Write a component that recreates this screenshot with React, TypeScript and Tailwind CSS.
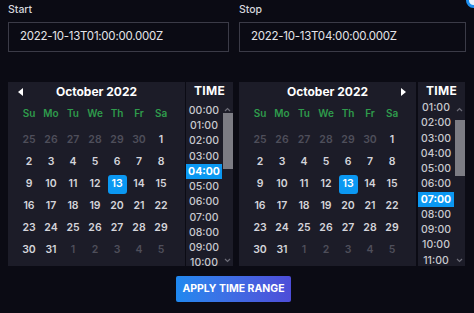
import React from "react";

const weekdays = ["Su", "Mo", "Tu", "We", "Th", "Fr", "Sa"];

type Day = { n: number; muted?: boolean };

const days: Day[] = [
    ...[25, 26, 27, 28, 29, 30].map((n) => ({ n, muted: true })),
    ...Array.from({ length: 31 }, (_, i) => ({ n: i + 1 })),
    ...[1, 2, 3, 4, 5].map((n) => ({ n, muted: true })),
];

const hour = (i: number) => `${String(i).padStart(2, "0")}:00`;

function Field({ label, value, width }: { label: string; value: string; width: string }) {
    return (
        <div className={`flex flex-col ${width}`}>
            <span className="text-[10.5px] leading-[14px] text-[#d6d6dc] font-medium">{label}</span>
            <div className="mt-[5px] h-[30px] border border-[#3b3b47] flex items-center pl-[11px] text-[11.5px] text-[#e4e4e8] tracking-[-0.25px]">
                {value}
            </div>
        </div>
    );
}

function Calendar({ arrow }: { arrow: "left" | "right" }) {
    return (
        <div className="w-[177px] h-[184px] bg-[#1c1c28] flex flex-col">
            {/* month header */}
            <div className="relative h-[20px] flex items-center justify-center text-[12px] font-bold text-white">
                {arrow === "left" && (
                    <span className="absolute left-[10px] top-[6px] w-0 h-0 border-y-[4px] border-y-transparent border-r-[5px] border-r-white" />
                )}
                October 2022
                {arrow === "right" && (
                    <span className="absolute right-[10px] top-[6px] w-0 h-0 border-y-[4px] border-y-transparent border-l-[5px] border-l-white" />
                )}
            </div>
            <div className="grid grid-cols-[repeat(7,22px)] pl-[10px] h-[22px] items-center">
                {weekdays.map((w) => (
                    <span key={w} className="text-center text-[10px] font-semibold text-[#2f9b4c]">
                        {w}
                    </span>
                ))}
            </div>
            <div className="grid grid-cols-[repeat(7,22px)] auto-rows-[22px] pl-[10px] mt-[5px]">
                {days.map((d, i) => {
                    const selected = !d.muted && d.n === 13;
                    return (
                        <div key={i} className="flex items-center justify-center">
                            <span
                                className={`w-[19px] h-[19px] flex items-center justify-center rounded-[3px] text-[10.5px] font-semibold ${
                                    selected ? "bg-[#0b98f2] text-white" : d.muted ? "text-[#4e4e5a]" : "text-[#d4d4da]"
                                }`}
                            >
                                {d.n}
                            </span>
                        </div>
                    );
                })}
            </div>
        </div>
    );
}

function TimeColumn({ first, last, selected, offset, thumbTop }: { first: number; last: number; selected: number; offset: string; thumbTop: string }) {
    const hours = Array.from({ length: last - first + 1 }, (_, i) => first + i);
    return (
        <div className="w-[47px] h-[184px] bg-[#1c1c28] flex flex-col">
            <div className="h-[18px] flex items-center justify-center text-[12px] font-bold text-white tracking-[0.3px]">
                TIME
            </div>
            <div className="flex flex-1 overflow-hidden">
                <div className="w-[36px] overflow-hidden">
                    <div className={offset}>
                        {hours.map((h) => (
                            <div
                                key={h}
                                className={`h-[15.25px] flex items-center justify-center text-[10.5px] ${
                                    h === selected ? "bg-[#0b98f2] text-white font-bold" : "text-[#c9c9cf] font-medium"
                                }`}
                            >
                                {hour(h)}
                            </div>
                        ))}
                    </div>
                </div>
                {/* scrollbar */}
                <div className="w-[11px] flex flex-col items-center">
                    <svg width="7" height="5" viewBox="0 0 7 5" className="mt-[7px]">
                        <path d="M1 4 L3.5 1.5 L6 4" stroke="#6d6d78" strokeWidth="1.2" fill="none" />
                    </svg>
                    <div className={`w-[10px] h-[56px] bg-[#7c7c84] ${thumbTop}`} />
                    <svg width="7" height="5" viewBox="0 0 7 5" className="mt-auto mb-[3px]">
                        <path d="M1 1 L3.5 3.5 L6 1" stroke="#6d6d78" strokeWidth="1.2" fill="none" />
                    </svg>
                </div>
            </div>
        </div>
    );
}

export default function App() {
    return (
        <div className="relative w-[474px] h-[313px] bg-[#0b0b14] overflow-hidden font-['Inter',sans-serif] px-[8px] pt-[3px]">
            {/* cut-off toggle at corner */}
            <span className="absolute left-[466px] top-[-7px] w-[15px] h-[15px] rounded-full border-[3px] border-[#1d8ff0] bg-[#e8f2fb]" />

            <div className="flex gap-[10px]">
                <Field label="Start" value="2022-10-13T01:00:00.000Z" width="w-[221px]" />
                <Field label="Stop" value="2022-10-13T04:00:00.000Z" width="w-[227px]" />
            </div>

            <div className="flex mt-[30px]">
                <div className="flex gap-[1px]">
                    <Calendar arrow="left" />
                    <TimeColumn first={0} last={10} selected={4} offset="mt-[3px]" thumbTop="mt-[1px]" />
                </div>
                <div className="flex gap-[2px] ml-[6px]">
                    <Calendar arrow="right" />
                    <TimeColumn first={1} last={11} selected={7} offset="mt-[0.25px]" thumbTop="mt-[8px]" />
                </div>
            </div>

            <div className="flex justify-center mt-[10px] pr-[7px]">
                <button className="w-[115px] h-[26px] rounded-[2px] bg-gradient-to-r from-[#1e88ef] to-[#4d4dd8] text-white text-[10.5px] font-bold whitespace-nowrap">
                    APPLY TIME RANGE
                </button>
            </div>
        </div>
    );
}
